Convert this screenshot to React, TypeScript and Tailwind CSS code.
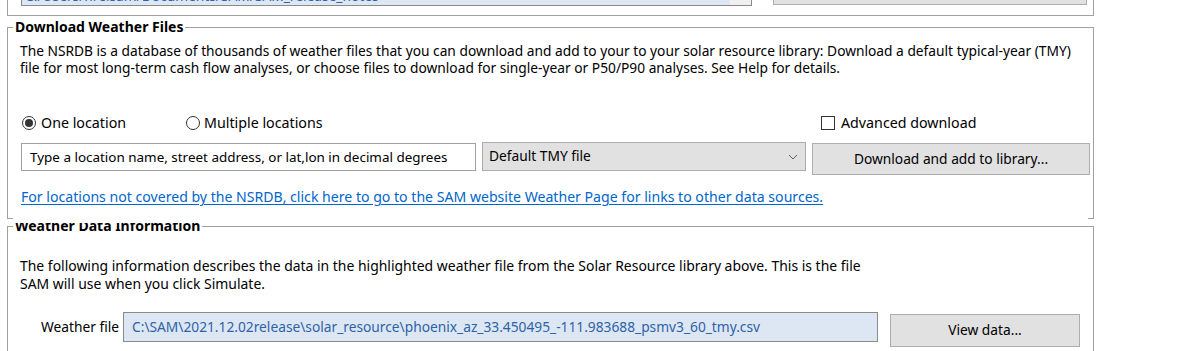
import React from "react";

function Radio({ checked }: { checked?: boolean }) {
  return (
    <span className="ml-px flex h-[14px] w-[14px] items-center justify-center rounded-full border border-[#333333] bg-white">
      {checked && <span className="h-[8px] w-[8px] rounded-full bg-[#333333]" />}
    </span>
  );
}

export default function App() {
  return (
    <div className="h-[351px] w-[1185px] overflow-hidden bg-white text-[13.75px] text-black font-['Noto_Sans',sans-serif]">
      {/* top panel (partially visible) */}
      <div className="ml-[7px] flex h-[16px] w-[1087px] items-end overflow-hidden border-x border-b border-[#a0a0a0]">
        <div className="mb-[9px] ml-[13px] flex h-[28px] w-[731px] shrink-0 items-end border border-[#8a8a8a] bg-[#dde7f3]">
          <div className="mb-px flex-1 pl-[3px] leading-[16px] text-[#2e62a8] whitespace-nowrap overflow-hidden">
            C:/Users/nrelsam/Documents/SAM/SAM_release_notes
          </div>
          <div className="h-full w-[21px] bg-[#f0f0f0]" />
        </div>
        <div className="mb-[10px] ml-[21px] h-[20px] w-[314px] shrink-0 border border-[#adadad] bg-[#e1e1e1]" />
      </div>

      {/* Download Weather Files */}
      <fieldset className="ml-[7px] mt-[3px] w-[1087px] border border-b-0 border-[#a0a0a0]">
        <legend className="ml-[5px] px-[2px] text-[14px] font-bold leading-[16px]">Download Weather Files</legend>
        <div className="pl-[13px]">
          <p className="-ml-px mt-[7px] leading-[17px]">
            The NSRDB is a database of thousands of weather files that you can download and add to your to your solar resource library: Download a default typical-year (TMY)
            <br />
            file for most long-term cash flow analyses, or choose files to download for single-year or P50/P90 analyses. See Help for details.
          </p>
          <div className="mt-[38px] flex h-[18px] items-center text-[14.25px] leading-[18px]">
            <label className="flex w-[164px] items-center gap-[5px]">
              <Radio checked />
              <span>One location</span>
            </label>
            <label className="flex w-[636px] items-center gap-[4px]">
              <Radio />
              <span>Multiple locations</span>
            </label>
            <label className="flex items-center gap-[6px]">
              <span className="h-[14px] w-[14px] border border-[#333333] bg-white" />
              <span>Advanced download</span>
            </label>
          </div>
          <div className="mt-[10px] flex items-start">
            <div className="mt-px flex h-[28px] w-[455px] items-center border border-[#a0a0a0] bg-white pl-[8px] text-[13.45px] whitespace-nowrap">
              Type a location name, street address, or lat,lon in decimal degrees
            </div>
            <div className="ml-[6px] flex h-[29px] w-[324px] items-center justify-between border border-[#adadad] bg-[#e1e1e1] pl-[6px] pr-[6px]">
              <span>Default TMY file</span>
              <svg width="10" height="6" viewBox="0 0 10 6" className="mr-[1px]">
                <path d="M1 1 L5 5 L9 1" fill="none" stroke="#606060" strokeWidth="1" />
              </svg>
            </div>
            <div className="ml-[6px] mt-px flex h-[32px] w-[278px] items-center justify-center border border-[#adadad] bg-[#e1e1e1]">
              Download and add to library...
            </div>
          </div>
          <div className="mt-[13px] leading-[18px]">
            <span className="text-[14.1px] text-[#0066cc] underline underline-offset-2">
              For locations not covered by the NSRDB, click here to go to the SAM website Weather Page for links to other data sources.
            </span>
          </div>
        </div>
        <div className="mt-[12px] flex justify-between">
          <div className="h-px w-[5px] bg-[#a0a0a0]" />
          <div className="h-px w-[5px] bg-[#a0a0a0]" />
        </div>
      </fieldset>

      {/* Weather Data Information */}
      <div className="mt-[4px] h-[128px] overflow-hidden">
        <fieldset className="-mt-[5px] ml-[7px] h-[200px] w-[1087px] border border-[#a0a0a0]">
          <legend className="ml-[5px] px-[2px] text-[14px] font-bold leading-[16px]">Weather Data Information</legend>
          <div className="pl-[13px]">
            <p className="-ml-px mt-[23px] text-[13.95px] leading-[18px]">
              The following information describes the data in the highlighted weather file from the Solar Resource library above. This is the file
              <br />
              SAM will use when you click Simulate.
            </p>
            <div className="mt-[19px] flex items-start">
              <div className="flex h-[30px] w-[102px] items-center justify-end pr-[4px] whitespace-nowrap">Weather file</div>
              <div className="flex h-[30px] w-[755px] items-center border border-[#8a8a8a] bg-[#dde7f3] pl-[8px] text-[#2e62a8] whitespace-nowrap">
                C:\SAM\2021.12.02release\solar_resource\phoenix_az_33.450495_-111.983688_psmv3_60_tmy.csv
              </div>
              <div className="ml-[12px] mt-[2px] flex h-[33px] w-[190px] items-center justify-center border border-[#adadad] bg-[#e1e1e1]">
                View data...
              </div>
            </div>
          </div>
        </fieldset>
      </div>
    </div>
  );
}
